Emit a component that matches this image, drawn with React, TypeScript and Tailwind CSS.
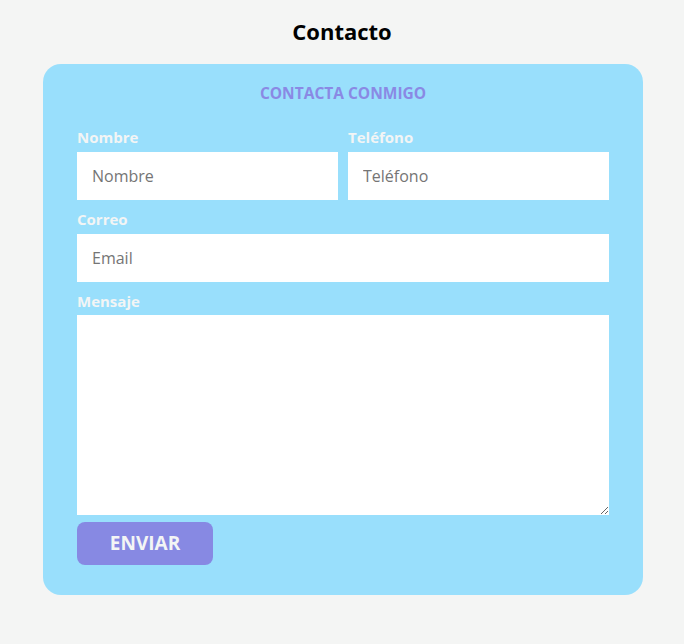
import { useState } from "react";

const inputClass =
  "block w-full h-[48px] bg-white px-[15px] text-[16px] text-[#333] placeholder:text-[#757575] outline-none border-0";

const labelClass =
  "block h-[18px] leading-[18px] text-[15px] font-bold text-[#f3f5f5]";

export default function App() {
  const [form, setForm] = useState({
    nombre: "",
    telefono: "",
    correo: "",
    mensaje: "",
  });

  const update =
    (key: keyof typeof form) =>
    (e: React.ChangeEvent<HTMLInputElement | HTMLTextAreaElement>) =>
      setForm({ ...form, [key]: e.target.value });

  return (
    <div
      className="min-h-[644px] bg-[#f4f5f4] pt-[18px]"
      style={{ fontFamily: "'Open Sans', 'Noto Sans', sans-serif" }}
    >
      <h1 className="text-center text-[22px] leading-[26px] font-bold text-black">
        Contacto
      </h1>

      <form
        className="ml-[43px] mt-[20px] w-[600px] rounded-[18px] bg-[#99dffc] px-[34px] pt-[20px] pb-[30px]"
        onSubmit={(e) => e.preventDefault()}
      >
        <h2 className="text-center text-[15.5px] leading-[18px] font-bold text-[#8a89e4]">
          CONTACTA CONMIGO
        </h2>

        <div className="mt-[26px] grid grid-cols-2 gap-x-[10px]">
          <div>
            <label className={`${labelClass} mb-[6px]`}>Nombre</label>
            <input
              className={inputClass}
              placeholder="Nombre"
              value={form.nombre}
              onChange={update("nombre")}
            />
          </div>
          <div>
            <label className={`${labelClass} mb-[6px]`}>Teléfono</label>
            <input
              className={inputClass}
              placeholder="Teléfono"
              value={form.telefono}
              onChange={update("telefono")}
            />
          </div>
        </div>

        <div className="mt-[10px]">
          <label className={`${labelClass} mb-[6px]`}>Correo</label>
          <input
            className={inputClass}
            placeholder="Email"
            value={form.correo}
            onChange={update("correo")}
          />
        </div>

        <div className="mt-[10px]">
          <label className={`${labelClass} mb-[5px]`}>Mensaje</label>
          <textarea
            className="block w-full h-[200px] bg-white p-[10px] text-[16px] outline-none border-0"
            value={form.mensaje}
            onChange={update("mensaje")}
          />
        </div>

        <button
          type="submit"
          className="mt-[7px] block h-[43px] w-[136px] rounded-[8px] bg-[#8789e3] text-[19px] font-bold text-[#f3f5f5]"
        >
          ENVIAR
        </button>
      </form>
    </div>
  );
}
